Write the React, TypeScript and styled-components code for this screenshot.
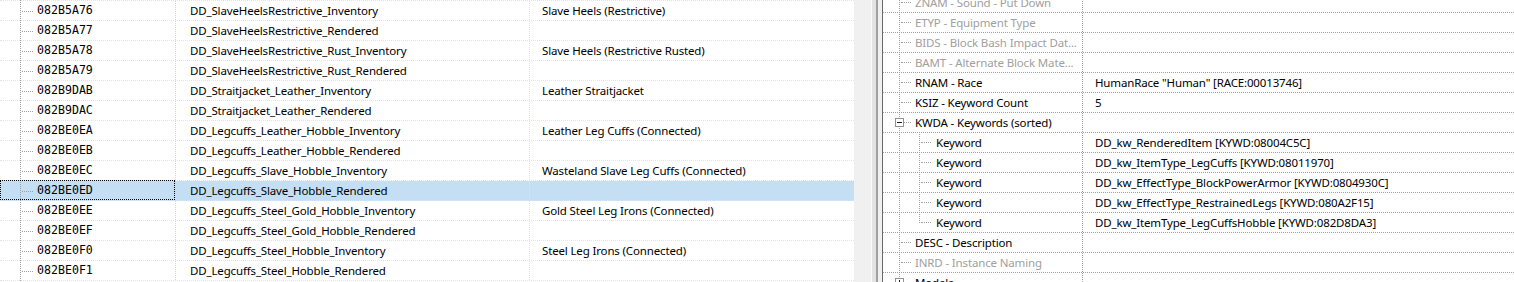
import React from 'react';
import styled, { createGlobalStyle } from 'styled-components';

const GlobalStyle = createGlobalStyle`
  html, body {
    margin: 0;
    padding: 0;
    background: #fff;
    overflow: hidden;
  }
  body {
    font-family: 'Noto Sans', 'Open Sans', sans-serif;
    font-size: 11.5px;
    letter-spacing: -0.15px;
    color: #000;
  }
`;

const Window = styled.div`
  display: flex;
  width: 1514px;
  height: 282px;
  overflow: hidden;
  background: #fff;
`;

/* ---------- left: record list ---------- */

const LeftPane = styled.div`
  display: flex;
  flex: none;
  width: 871px;
`;

const RecordList = styled.div`
  width: 854px;
  border-top: 1px dotted #e3e3e3;
`;

const ScrollTrack = styled.div`
  width: 17px;
  background: #f0f0f0;
`;

const Splitter = styled.div`
  flex: none;
  width: 12px;
  background: linear-gradient(
    to right,
    #fbfbfb 0 1px,
    #e3e3e3 1px 5px,
    #a0a0a0 5px 7px,
    #f0f0f0 7px 11px,
    #696969 11px 12px
  );
`;

const ListRow = styled.div<{ $selected?: boolean }>`
  display: grid;
  grid-template-columns: 176px 354px 1fr;
  height: 20px;
  box-sizing: border-box;
  border-bottom: 1px dotted #e3e3e3;
  background: ${(p) => (p.$selected ? '#c4def4' : 'transparent')};
`;

const Cell = styled.div<{ $pad: number }>`
  position: relative;
  box-sizing: border-box;
  padding-left: ${(p) => p.$pad}px;
  line-height: 19px;
  white-space: nowrap;
  overflow: hidden;
  border-right: 1px dotted #e3e3e3;

  &:last-child {
    border-right: none;
  }
`;

const FormId = styled(Cell)`
  font-family: 'DejaVu Sans Mono', 'Liberation Mono', monospace;
  font-size: 11.6px;
  letter-spacing: 0;
  overflow: visible;
  border-right-color: #d6d6d6;

  &::before {
    content: '';
    position: absolute;
    left: 20px;
    top: -1px;
    bottom: -1px;
    border-left: 1px dotted #a0a0a0;
  }

  &::after {
    content: '';
    position: absolute;
    left: 22px;
    width: 11px;
    top: 10px;
    border-top: 1px dotted #a0a0a0;
  }
`;

const FocusRing = styled.span`
  position: absolute;
  left: 0;
  right: 0;
  top: -1px;
  bottom: 0;
  border: 1px dotted #000;
  pointer-events: none;
`;

/* ---------- right: record view ---------- */

const RightPane = styled.div`
  flex: 1;
  overflow: hidden;
  background: #fff;
`;

const TreeBody = styled.div`
  margin-top: -7px;
`;

const TreeRow = styled.div`
  display: grid;
  grid-template-columns: 200px 1fr;
  height: 20px;
  box-sizing: border-box;
  border-bottom: 1px dotted #a0a0a0;
`;

const NameCell = styled.div<{ $level: number; $muted?: boolean }>`
  position: relative;
  box-sizing: border-box;
  padding-left: ${(p) => (p.$level === 1 ? 32 : 53)}px;
  line-height: 19px;
  white-space: nowrap;
  overflow: hidden;
  color: ${(p) => (p.$muted ? '#a0a0a0' : '#000')};
  border-right: 1px dotted #a0a0a0;
`;

const ValueCell = styled.div`
  padding-left: 12px;
  line-height: 19px;
  white-space: nowrap;
  overflow: hidden;
`;

const VLine = styled.span<{ $x: number; $end?: boolean }>`
  position: absolute;
  left: ${(p) => p.$x}px;
  top: -1px;
  ${(p) => (p.$end ? 'height: 11px;' : 'bottom: -1px;')}
  border-left: 1px dotted #a0a0a0;
`;

const Branch = styled.span<{ $x: number }>`
  position: absolute;
  left: ${(p) => p.$x}px;
  width: 10px;
  top: 9px;
  border-top: 1px dotted #a0a0a0;
`;

const Expander = styled.span<{ $open: boolean }>`
  position: absolute;
  left: 12px;
  top: 5px;
  width: 9px;
  height: 9px;
  box-sizing: border-box;
  border: 1px solid #919191;
  background: #fff;

  &::before {
    content: '';
    position: absolute;
    left: 1px;
    right: 1px;
    top: 3px;
    height: 1px;
    background: #1a1a1a;
  }

  &::after {
    content: '';
    display: ${(p) => (p.$open ? 'none' : 'block')};
    position: absolute;
    top: 1px;
    bottom: 1px;
    left: 3px;
    width: 1px;
    background: #1a1a1a;
  }
`;

type Rec = { id: string; edid: string; name?: string };

const records: Rec[] = [
  { id: '082B5A76', edid: 'DD_SlaveHeelsRestrictive_Inventory', name: 'Slave Heels (Restrictive)' },
  { id: '082B5A77', edid: 'DD_SlaveHeelsRestrictive_Rendered' },
  { id: '082B5A78', edid: 'DD_SlaveHeelsRestrictive_Rust_Inventory', name: 'Slave Heels (Restrictive Rusted)' },
  { id: '082B5A79', edid: 'DD_SlaveHeelsRestrictive_Rust_Rendered' },
  { id: '082B9DAB', edid: 'DD_Straitjacket_Leather_Inventory', name: 'Leather Straitjacket' },
  { id: '082B9DAC', edid: 'DD_Straitjacket_Leather_Rendered' },
  { id: '082BE0EA', edid: 'DD_Legcuffs_Leather_Hobble_Inventory', name: 'Leather Leg Cuffs (Connected)' },
  { id: '082BE0EB', edid: 'DD_Legcuffs_Leather_Hobble_Rendered' },
  { id: '082BE0EC', edid: 'DD_Legcuffs_Slave_Hobble_Inventory', name: 'Wasteland Slave Leg Cuffs (Connected)' },
  { id: '082BE0ED', edid: 'DD_Legcuffs_Slave_Hobble_Rendered' },
  { id: '082BE0EE', edid: 'DD_Legcuffs_Steel_Gold_Hobble_Inventory', name: 'Gold Steel Leg Irons (Connected)' },
  { id: '082BE0EF', edid: 'DD_Legcuffs_Steel_Gold_Hobble_Rendered' },
  { id: '082BE0F0', edid: 'DD_Legcuffs_Steel_Hobble_Inventory', name: 'Steel Leg Irons (Connected)' },
  { id: '082BE0F1', edid: 'DD_Legcuffs_Steel_Hobble_Rendered' },
];

const SELECTED = '082BE0ED';

type Field = {
  name: string;
  value?: string;
  level: 1 | 2;
  muted?: boolean;
  expander?: 'open' | 'closed';
  last?: boolean;
};

const fields: Field[] = [
  { name: 'ZNAM - Sound - Put Down', level: 1, muted: true },
  { name: 'ETYP - Equipment Type', level: 1, muted: true },
  { name: 'BIDS - Block Bash Impact Dat...', level: 1, muted: true },
  { name: 'BAMT - Alternate Block Mate...', level: 1, muted: true },
  { name: 'RNAM - Race', value: 'HumanRace "Human" [RACE:00013746]', level: 1 },
  { name: 'KSIZ - Keyword Count', value: '5', level: 1 },
  { name: 'KWDA - Keywords (sorted)', level: 1, expander: 'open' },
  { name: 'Keyword', value: 'DD_kw_RenderedItem [KYWD:08004C5C]', level: 2 },
  { name: 'Keyword', value: 'DD_kw_ItemType_LegCuffs [KYWD:08011970]', level: 2 },
  { name: 'Keyword', value: 'DD_kw_EffectType_BlockPowerArmor [KYWD:0804930C]', level: 2 },
  { name: 'Keyword', value: 'DD_kw_EffectType_RestrainedLegs [KYWD:080A2F15]', level: 2 },
  { name: 'Keyword', value: 'DD_kw_ItemType_LegCuffsHobble [KYWD:082D8DA3]', level: 2, last: true },
  { name: 'DESC - Description', level: 1 },
  { name: 'INRD - Instance Naming', level: 1, muted: true },
  { name: 'Models', level: 1, expander: 'closed' },
];

export default function App() {
  return (
    <>
      <GlobalStyle />
      <Window>
        <LeftPane>
          <RecordList>
            {records.map((r) => {
              const selected = r.id === SELECTED;
              return (
                <ListRow key={r.id} $selected={selected}>
                  <FormId $pad={37}>
                    {r.id}
                    {selected && <FocusRing />}
                  </FormId>
                  <Cell $pad={14}>{r.edid}</Cell>
                  <Cell $pad={12}>{r.name}</Cell>
                </ListRow>
              );
            })}
          </RecordList>
          <ScrollTrack />
        </LeftPane>
        <Splitter />
        <RightPane>
          <TreeBody>
            {fields.map((f, i) => (
              <TreeRow key={i}>
                <NameCell $level={f.level} $muted={f.muted}>
                  <VLine $x={16} />
                  {f.level === 2 && <VLine $x={36} $end={f.last} />}
                  <Branch $x={f.level === 1 ? 18 : 38} />
                  {f.expander && <Expander $open={f.expander === 'open'} />}
                  {f.name}
                </NameCell>
                <ValueCell>{f.value}</ValueCell>
              </TreeRow>
            ))}
          </TreeBody>
        </RightPane>
      </Window>
    </>
  );
}
